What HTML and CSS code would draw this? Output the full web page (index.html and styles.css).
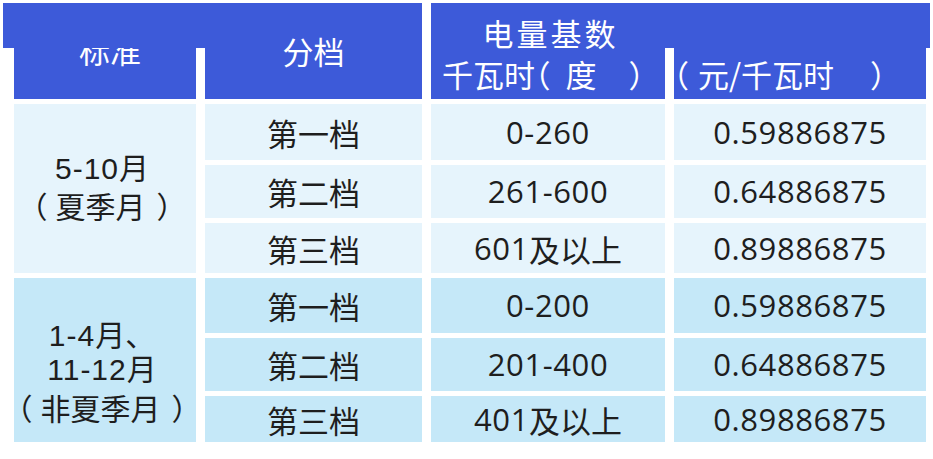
FILE: index.html
```html
<!DOCTYPE html>
<html lang="zh-CN">
<head>
<meta charset="utf-8">
<title>电价表</title>
<link rel="stylesheet" href="styles.css">
</head>
<body>
<div class="wrap">
  <div class="table">
    <div class="h h1">标准</div>
    <div class="h h2">分档</div>
    <div class="h h3">
      <div class="t1">电量基数</div>
      <div class="t2">千瓦时<span class="op">（</span>度<span class="cpw">）</span></div>
    </div>
    <div class="h h4"><div><span class="op">（</span>元/千瓦时<span class="cpw">）</span></div></div>

    <div class="c g1 season s1">
      <div><span class="sn">5-10</span>月</div>
      <div><span class="op">（</span>夏季月<span class="cp">）</span></div>
    </div>
    <div class="c g1">第一档</div>
    <div class="c g1"><span class="num">0-260</span></div>
    <div class="c g1"><span class="num">0.59886875</span></div>
    <div class="c g1">第二档</div>
    <div class="c g1"><span class="num">261-600</span></div>
    <div class="c g1"><span class="num">0.64886875</span></div>
    <div class="c g1">第三档</div>
    <div class="c g1"><span class="num">601</span>及以上</div>
    <div class="c g1"><span class="num">0.89886875</span></div>

    <div class="c g2 season s2">
      <div class="l1"><span class="sn">1-4</span>月、</div>
      <div class="l2"><span class="sn">11-12</span>月</div>
      <div class="l3"><span class="op">（</span>非夏季月<span class="cp">）</span></div>
    </div>
    <div class="c g2">第一档</div>
    <div class="c g2"><span class="num">0-200</span></div>
    <div class="c g2"><span class="num">0.59886875</span></div>
    <div class="c g2">第二档</div>
    <div class="c g2"><span class="num">201-400</span></div>
    <div class="c g2"><span class="num">0.64886875</span></div>
    <div class="c g2">第三档</div>
    <div class="c g2"><span class="num">401</span>及以上</div>
    <div class="c g2"><span class="num">0.89886875</span></div>
  </div>
  <div class="mask mask-l"></div>
  <div class="mask mask-r"></div>
</div>
</body>
</html>
```

FILE: styles.css
```css
html, body {
  margin: 0;
  padding: 0;
  background: #ffffff;
}

.wrap {
  position: relative;
  width: 933px;
  height: 459px;
  padding: 3px 0 0 14px;
  box-sizing: border-box;
  font-family: "Noto Sans CJK SC", sans-serif;
}

.table {
  display: grid;
  grid-template-columns: 182px 217px 234px 252px;
  grid-template-rows: 96px 56px 53px 50px 55px 53px 46px;
  column-gap: 9px;
  row-gap: 5px;
}

/* half-width brackets: drop the empty half of the em box */
.op, .cp, .cpw {
  font-feature-settings: "halt" 1;
}

/* header */
.h {
  background: #3d5ad9;
  color: #ffffff;
  font-size: 31px;
  display: flex;
  flex-direction: column;
  align-items: center;
  justify-content: center;
  line-height: 40px;
  white-space: nowrap;
}

.h1 {
  padding-left: 10px;
  padding-bottom: 2px;
}

.h3 {
  font-family: "Liberation Sans", "Noto Sans CJK SC", sans-serif;
  line-height: 41px;
  padding-top: 10px;
}

.h3 .t1 {
  letter-spacing: 3px;
  padding-left: 5px;
}

.h3 .t2 {
  padding-right: 10px;
}

.h3 .op {
  margin-right: 15px;
}

.h3 .cpw {
  margin-left: 32px;
}

.h4 {
  justify-content: flex-end;
  padding-bottom: 5px;
  padding-right: 41px;
}

.h4 .op {
  margin-right: 9px;
}

.h4 .cpw {
  margin-left: 36px;
}

/* body cells */
.c {
  display: flex;
  align-items: center;
  justify-content: center;
  font-size: 31px;
  color: #1e1e1e;
  line-height: 1;
  white-space: nowrap;
}

.num {
  font-family: "Open Sans", "Noto Sans CJK SC", sans-serif;
  font-size: 31px;
  letter-spacing: 0.6px;
}

.g1 {
  background: #e6f4fc;
}

.g2 {
  background: #c5e8f8;
}

.season {
  grid-column: 1;
  flex-direction: column;
  font-size: 30px;
  font-family: "Liberation Sans", "Noto Sans CJK SC", sans-serif;
  padding-right: 6px;
}

.season .sn {
  font-size: 30px;
  letter-spacing: 1px;
}

.season .op {
  margin-right: 8px;
}

.season .cp {
  margin-left: 11px;
}

.s1 {
  grid-row: 2 / span 3;
  line-height: 39px;
  padding-bottom: 2px;
}

.s2 {
  grid-row: 5 / span 3;
  line-height: 34px;
  padding-top: 25px;
}

.s2 .l3 {
  margin-top: 6px;
}

/* patched band over the top of the header */
.mask {
  position: absolute;
  top: 3px;
  height: 45px;
  background: #3d5ad9;
}

.mask-l {
  left: 3px;
  width: 207px;
}

.mask-r {
  left: 660px;
  width: 270px;
}
```
